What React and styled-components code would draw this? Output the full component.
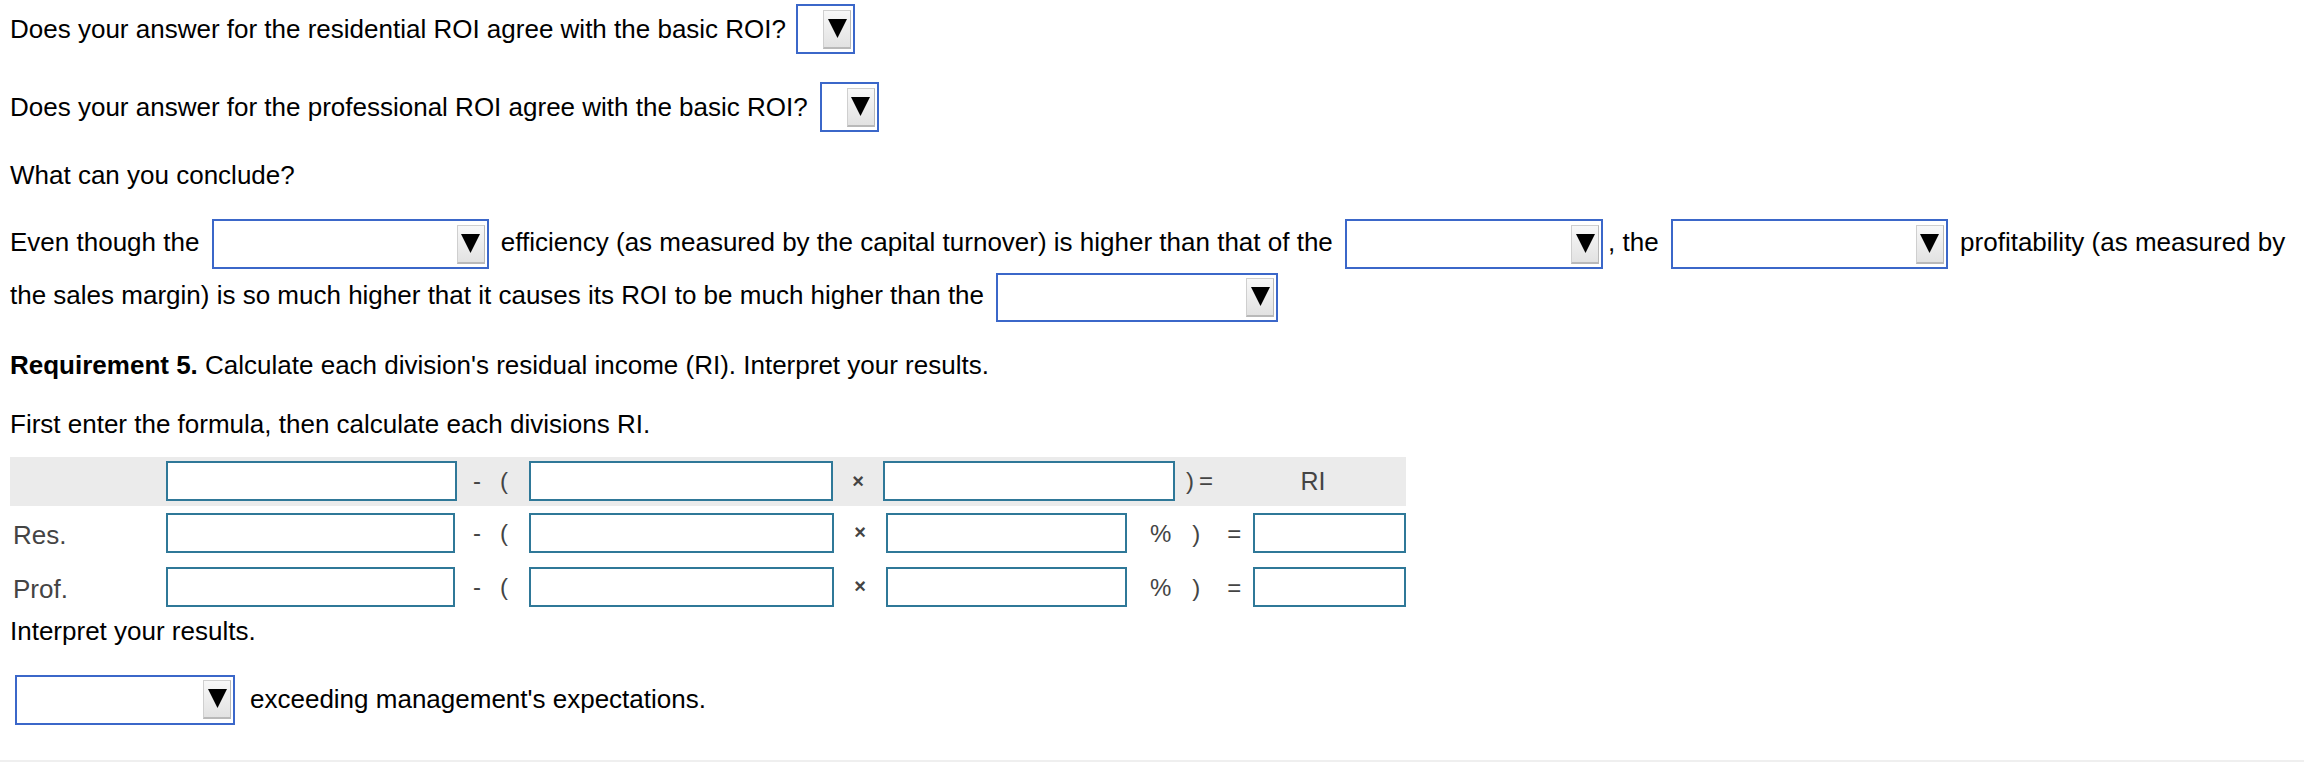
import React from 'react';
import styled, { createGlobalStyle } from 'styled-components';

const Global = createGlobalStyle`
  html, body { margin: 0; padding: 0; background: #fff; }
  body { font-family: "Liberation Sans", Arial, Helvetica, sans-serif; color: #000; }
  * { box-sizing: border-box; }
`;

const Page = styled.div`
  width: 2304px;
  height: 762px;
  padding: 4px 0 0 10px;
  border-bottom: 2px solid #efefef;
  display: flex;
  flex-direction: column;
  font-size: 26px;
  overflow: hidden;
`;

const QuestionRow = styled.div`
  display: flex;
  align-items: center;
  gap: ${(p) => p.$gap || 10}px;
  height: 50px;
  margin-top: ${(p) => p.$mt || 0}px;
  margin-left: ${(p) => p.$ml || 0}px;
  white-space: nowrap;
`;

const Line = styled.p`
  margin: ${(p) => p.$mt || 0}px 0 0 0;
  line-height: 30px;
  white-space: nowrap;
`;

const Flow = styled.p`
  margin: ${(p) => p.$mt || 0}px 0 0 0;
  line-height: 52px;
  white-space: nowrap;
`;

const SelectBox = styled.span`
  display: inline-flex;
  justify-content: flex-end;
  align-items: center;
  vertical-align: middle;
  width: ${(p) => p.$w}px;
  height: ${(p) => p.$h || 50}px;
  margin: 0 ${(p) => (p.$inline ? 5 : 0)}px;
  padding-right: 2px;
  border: 2px solid #3b67c9;
  background: #fff;
  flex-shrink: 0;
`;

const DropButton = styled.span`
  display: flex;
  justify-content: center;
  align-items: flex-start;
  padding-top: 8px;
  width: 28px;
  height: 39px;
  background: linear-gradient(#f8f8f8, #e2e2e2);
  border: 1px solid #cfcfcf;
  border-right-color: #b9b9b9;
  border-bottom: 2px solid #b9b9b9;
`;

const Select = ({ w, h, inline }) => (
  <SelectBox $w={w} $h={h} $inline={inline}>
    <DropButton>
      <svg width="19" height="19" viewBox="0 0 19 19">
        <polygon points="0,0 19,0 9.5,19" fill="#000" />
      </svg>
    </DropButton>
  </SelectBox>
);

const Bold = styled.b`
  font-weight: 700;
`;

const Table = styled.div`
  margin-top: 18px;
  width: 1396px;
  display: flex;
  flex-direction: column;
  color: #444;
  font-size: 24px;
`;

const TRow = styled.div`
  display: grid;
  grid-template-columns: ${(p) => p.$cols};
  align-items: center;
  height: ${(p) => p.$h}px;
  background: ${(p) => p.$bg || 'transparent'};
`;

const Label = styled.span`
  padding-left: 3px;
  padding-top: 5px;
  font-size: 26px;
`;

const Field = styled.input`
  display: block;
  width: 100%;
  height: 40px;
  border: 2px solid #2f7898;
  background: #fff;
  outline: none;
  margin: 0;
  padding: 0 6px;
  font: inherit;
`;

const Ops = styled.span`
  display: flex;
  align-items: center;
  padding-left: ${(p) => p.$pl || 0}px;
  padding-top: ${(p) => p.$pt || 0}px;
  justify-content: ${(p) => (p.$center ? 'center' : 'flex-start')};
`;

const Sym = styled.span`
  margin-left: ${(p) => p.$ml || 0}px;
  font-size: ${(p) => p.$fs || 24}px;
  font-weight: ${(p) => p.$fw || 400};
`;

const HEAD_COLS = '156px 291px 72px 304px 50px 292px 45px 186px';
const ROW_COLS = '156px 289px 74px 305px 52px 241px 126px 153px';

const DataRow = ({ label }) => (
  <TRow $cols={ROW_COLS} $h={54}>
    <Label>{label}</Label>
    <Field readOnly />
    <Ops $pl={18}>
      <Sym>-</Sym>
      <Sym $ml={19}>(</Sym>
    </Ops>
    <Field readOnly />
    <Ops $center>
      <Sym $fs={20} $fw={700}>×</Sym>
    </Ops>
    <Field readOnly />
    <Ops $pl={23} $pt={3}>
      <Sym>%</Sym>
      <Sym $ml={21}>)</Sym>
      <Sym $ml={27}>=</Sym>
    </Ops>
    <Field readOnly />
  </TRow>
);

export default function App() {
  return (
    <>
      <Global />
      <Page>
        <QuestionRow>
          Does your answer for the residential ROI agree with the basic ROI?
          <Select w={59} />
        </QuestionRow>
        <QuestionRow $mt={28} $gap={12}>
          Does your answer for the professional ROI agree with the basic ROI?
          <Select w={59} />
        </QuestionRow>
        <Line $mt={28}>What can you conclude?</Line>
        <Flow $mt={26}>
          Even though the <Select w={277} inline /> efficiency (as measured by the capital turnover) is higher than that of the{' '}
          <Select w={258} inline />, the <Select w={277} inline /> profitability (as measured by
          <br />
          the sales margin) is so much higher that it causes its ROI to be much higher than the{' '}
          <Select w={282} h={49} inline />
        </Flow>
        <Line $mt={28}>
          <Bold>Requirement 5.</Bold> Calculate each division's residual income (RI). Interpret your results.
        </Line>
        <Line $mt={29}>First enter the formula, then calculate each divisions RI.</Line>
        <Table>
          <TRow $cols={HEAD_COLS} $h={49} $bg="#ebebeb">
            <span />
            <Field readOnly />
            <Ops $pl={16}>
              <Sym>-</Sym>
              <Sym $ml={19}>(</Sym>
            </Ops>
            <Field readOnly />
            <Ops $center>
              <Sym $fs={20} $fw={700}>×</Sym>
            </Ops>
            <Field readOnly />
            <Ops $pl={11}>
              <Sym>)</Sym>
              <Sym $ml={5}>=</Sym>
            </Ops>
            <Ops $center>
              <Sym $fs={25}>RI</Sym>
            </Ops>
          </TRow>
          <DataRow label="Res." />
          <DataRow label="Prof." />
        </Table>
        <Line $mt={2}>Interpret your results.</Line>
        <QuestionRow $mt={29} $ml={5} $gap={15}>
          <Select w={220} />
          exceeding management's expectations.
        </QuestionRow>
      </Page>
    </>
  );
}
